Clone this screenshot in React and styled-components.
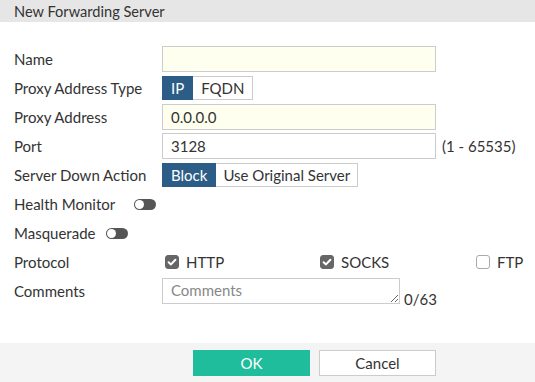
import React, { useState } from 'react'
import styled, { createGlobalStyle } from 'styled-components'

const GlobalStyle = createGlobalStyle`
  html, body { margin: 0; padding: 0; background: #fff; }
  body { font-family: Lato, "Open Sans", sans-serif; font-size: 15px; color: #333; }
  * { box-sizing: border-box; }
`

const Dialog = styled.div`
  width: 535px;
  height: 382px;
  display: flex;
  flex-direction: column;
  background: #fff;
  overflow: hidden;
`

const Header = styled.div`
  height: 22px;
  background: #e6e6e6;
  padding: 0 14px;
  display: flex;
  align-items: center;
  font-size: 14.6px;
  color: #333;
`

const Body = styled.div`
  flex: 1;
  padding: 24px 0 0 14px;
  display: flex;
  flex-direction: column;
  gap: 3px;
`

const Row = styled.div`
  display: flex;
  align-items: center;
  min-height: 26px;
`

const Label = styled.div`
  width: 148px;
  flex-shrink: 0;
  display: flex;
  align-items: center;
  white-space: nowrap;
`

const TextInput = styled.input`
  width: 274px;
  height: 26px;
  border: 1px solid #ccc;
  background: ${p => (p.$required ? '#fffff0' : '#fff')};
  padding: 0 8px;
  font: inherit;
  color: #333;
  outline: none;
`

const Hint = styled.span`
  margin-left: 6px;
  color: #333;
`

const Segmented = styled.div`
  display: flex;
  height: 24px;
`

const Segment = styled.button`
  height: 24px;
  padding: 0 ${p => p.$pad}px;
  font: inherit;
  border: 1px solid ${p => (p.$active ? '#2b5d87' : '#ccc')};
  border-left-width: ${p => (p.$first ? 1 : 0)}px;
  background: ${p => (p.$active ? '#2b5d87' : '#fff')};
  color: ${p => (p.$active ? '#fff' : '#333')};
  cursor: pointer;
`

const Toggle = styled.span`
  display: inline-block;
  position: relative;
  width: 22px;
  height: 11px;
  border-radius: 6px;
  background: #555;
  margin-left: ${p => p.$gap}px;
  &::after {
    content: '';
    position: absolute;
    left: 1px;
    top: 1px;
    width: 9px;
    height: 9px;
    border-radius: 50%;
    background: #fff;
  }
`

const Options = styled.div`
  display: grid;
  grid-template-columns: 155px 156px auto;
  padding-left: 3px;
`

const Check = styled.label`
  display: flex;
  align-items: center;
  gap: 7px;
  cursor: pointer;
`

const Box = styled.span`
  width: 14px;
  height: 14px;
  border-radius: 3px;
  border: 1px solid ${p => (p.$on ? '#666' : '#aaa')};
  background: ${p => (p.$on ? '#666' : '#fff')};
  display: flex;
  align-items: center;
  justify-content: center;
`

const TextArea = styled.textarea`
  width: 238px;
  height: 26px;
  border: 1px solid #ccc;
  padding: 2px 8px;
  font: inherit;
  color: #333;
  resize: both;
  outline: none;
  &::placeholder { color: #888; }
`

const Counter = styled.span`
  align-self: flex-end;
  margin-left: 4px;
  line-height: 16px;
  margin-bottom: -3px;
`

const Footer = styled.div`
  height: 39px;
  background: #f4f4f4;
  display: flex;
  align-items: center;
  gap: 9px;
  padding: 0 0 0 193px;
`

const Button = styled.button`
  width: 117px;
  height: 26px;
  font: inherit;
  font-size: 15px;
  border: 1px solid ${p => (p.$primary ? '#1fbd9b' : '#ccc')};
  background: ${p => (p.$primary ? '#1fbd9b' : '#fff')};
  color: ${p => (p.$primary ? '#fff' : '#333')};
  cursor: pointer;
`

const CheckMark = () => (
  <svg width="10" height="10" viewBox="0 0 10 10">
    <path d="M1.6 5.2 L4 7.4 L8.4 2.8" stroke="#fff" strokeWidth="2" fill="none" strokeLinecap="round" strokeLinejoin="round" />
  </svg>
)

const CheckItem = ({ on, children }) => (
  <Check>
    <Box $on={on}>{on && <CheckMark />}</Box>
    {children}
  </Check>
)

export default function App() {
  const [addrType, setAddrType] = useState('IP')
  const [downAction, setDownAction] = useState('Block')

  return (
    <Dialog>
      <GlobalStyle />
      <Header>New Forwarding Server</Header>
      <Body>
        <Row>
          <Label>Name</Label>
          <TextInput $required defaultValue="" />
        </Row>
        <Row>
          <Label>Proxy Address Type</Label>
          <Segmented>
            <Segment $first $pad={8} $active={addrType === 'IP'} onClick={() => setAddrType('IP')}>IP</Segment>
            <Segment $pad={8} $active={addrType === 'FQDN'} onClick={() => setAddrType('FQDN')}>FQDN</Segment>
          </Segmented>
        </Row>
        <Row>
          <Label>Proxy Address</Label>
          <TextInput $required defaultValue="0.0.0.0" />
        </Row>
        <Row>
          <Label>Port</Label>
          <TextInput defaultValue="3128" />
          <Hint>(1 - 65535)</Hint>
        </Row>
        <Row>
          <Label>Server Down Action</Label>
          <Segmented>
            <Segment $first $pad={8} $active={downAction === 'Block'} onClick={() => setDownAction('Block')}>Block</Segment>
            <Segment $pad={7} $active={downAction === 'Original'} onClick={() => setDownAction('Original')}>Use Original Server</Segment>
          </Segmented>
        </Row>
        <Row>
          <Label>Health Monitor<Toggle $gap={19} /></Label>
        </Row>
        <Row>
          <Label>Masquerade<Toggle $gap={11} /></Label>
        </Row>
        <Row>
          <Label>Protocol</Label>
          <Options>
            <CheckItem on>HTTP</CheckItem>
            <CheckItem on>SOCKS</CheckItem>
            <CheckItem>FTP</CheckItem>
          </Options>
        </Row>
        <Row>
          <Label>Comments</Label>
          <TextArea placeholder="Comments" />
          <Counter>0/63</Counter>
        </Row>
      </Body>
      <Footer>
        <Button $primary>OK</Button>
        <Button>Cancel</Button>
      </Footer>
    </Dialog>
  )
}
